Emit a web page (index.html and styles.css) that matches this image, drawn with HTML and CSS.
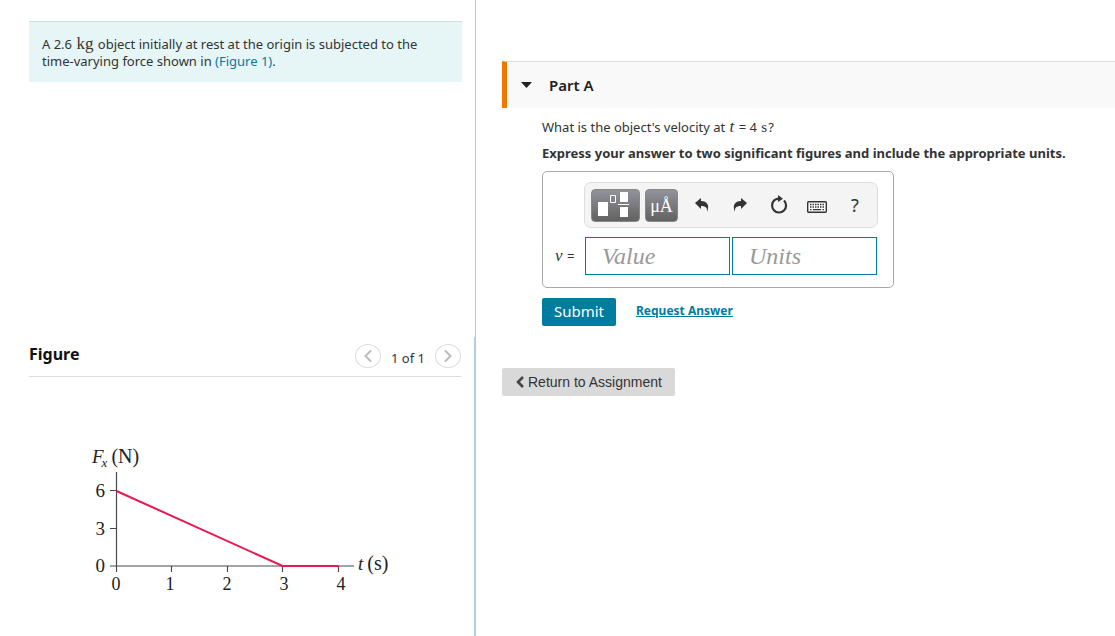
FILE: index.html
```html
<!DOCTYPE html>
<html lang="en">
<head>
    <meta charset="UTF-8">
    <meta name="viewport" content="width=device-width, initial-scale=1.0">
    <title>Part A</title>
    <link rel="stylesheet" href="styles.css">
</head>
<body>
    <div class="layout">
        <aside class="left">
            <section class="intro">
                <p class="problem">A 2.6 <span class="math">kg</span> object initially at rest at the origin is subjected to the time-varying force shown in <a href="#figure">(Figure 1)</a>.</p>
            </section>
            <section class="figure" id="figure">
                <header class="figure-header">
                    <h2>Figure</h2>
                    <nav class="pager">
                        <button type="button" class="round" aria-label="Previous figure">
                            <svg width="10" height="14" viewBox="0 0 10 14"><path d="M8 1.5 2.5 7 8 12.5" fill="none" stroke="#bbb" stroke-width="2"/></svg>
                        </button>
                        <span class="count">1 of 1</span>
                        <button type="button" class="round" aria-label="Next figure">
                            <svg width="10" height="14" viewBox="0 0 10 14"><path d="M2 1.5 7.5 7 2 12.5" fill="none" stroke="#bbb" stroke-width="2"/></svg>
                        </button>
                    </nav>
                </header>
                <svg class="graph" width="310" height="150" viewBox="0 0 310 150" role="img" aria-label="Force against time">
                    <g stroke="#4a4a4a" stroke-width="1.2" fill="none">
                        <path d="M28.5 26V120M22 120H266"/>
                        <path d="M22 44.5h6M22 82.5h6"/>
                        <path d="M28.5 120v6M83.5 120v6M139.5 120v6M194.5 120v6M250.5 120v6"/>
                    </g>
                    <path d="M28.5 45 194.5 120H250.5" fill="none" stroke="#ec1651" stroke-width="2"/>
                    <text x="4" y="17"><tspan class="var">F</tspan><tspan class="var sub" dy="4" dx="-2">x</tspan><tspan dy="-4" dx="4" class="unit">(N)</tspan></text>
                    <g text-anchor="end">
                        <text x="17" y="51">6</text>
                        <text x="17" y="89">3</text>
                        <text x="17" y="126">0</text>
                    </g>
                    <g text-anchor="middle" class="ticks">
                        <text x="28" y="144">0</text>
                        <text x="82" y="144">1</text>
                        <text x="139" y="144">2</text>
                        <text x="196" y="144">3</text>
                        <text x="253" y="144">4</text>
                    </g>
                    <text x="270" y="124"><tspan class="var">t</tspan><tspan dx="4" class="unit">(s)</tspan></text>
                </svg>
            </section>
        </aside>

        <main class="right">
            <header class="part-header">
                <svg width="11" height="6" viewBox="0 0 11 6"><path d="M0 0h11L5.5 6z" fill="#222"/></svg>
                <h1>Part A</h1>
            </header>
            <form class="part">
                <p class="question">What is the object's velocity at <i class="math">t</i> = 4 <span class="math small">s</span>?</p>
                <p class="hint">Express your answer to two significant figures and include the appropriate units.</p>
                <div class="answer">
                    <div class="toolbar">
                        <button type="button" class="key wide" aria-label="Templates">
                            <svg width="32" height="26" viewBox="0 0 32 26">
                                <g fill="#fff"><path d="M0 10h10v14H0zM22 0h8v10h-8zM22 15h8v10h-8zM20 12h11v1H20z"/></g>
                                <path d="M12.5 3.5h5v7h-5z" fill="none" stroke="#fff"/>
                            </svg>
                        </button>
                        <button type="button" class="key">μÅ</button>
                        <span class="tools">
                            <button type="button" class="tool" aria-label="Undo">
                                <svg width="16" height="16" viewBox="0 0 16 16"><path d="M1 6 7 1v3c6 0 9 4 6 11 .5-4-1-6-6-6v3z" fill="#333"/></svg>
                            </button>
                            <button type="button" class="tool" aria-label="Redo">
                                <svg width="16" height="16" viewBox="0 0 16 16"><path d="M15 6 9 1v3c-6 0-9 4-6 11-.5-4 1-6 6-6v3z" fill="#333"/></svg>
                            </button>
                            <button type="button" class="tool" aria-label="Reset">
                                <svg width="18" height="20" viewBox="0 0 18 20"><path d="M14 5.500A7 7 0 1 1 4.500 5.200Q6.500 3.700 9 3.700" fill="none" stroke="#333" stroke-width="2.2"/><path d="M8 0v7l5-3.300z" fill="#333"/></svg>
                            </button>
                            <button type="button" class="tool keyboard" aria-label="Keyboard shortcuts">
                                <svg width="20" height="12" viewBox="0 0 20 12"><rect x="0.7" y="0.7" width="18.6" height="10.6" rx="1" fill="#fff" stroke="#333" stroke-width="1.4"/><path d="M3 3.500h14M3 6h14" stroke="#333" stroke-width="1.5" stroke-dasharray="1.5 1"/><path d="M3 8.700h1.500M6 8.700h8M15.500 8.700H17" stroke="#333" stroke-width="1.3"/></svg>
                            </button>
                            <button type="button" class="tool help" aria-label="Help">?</button>
                        </span>
                    </div>
                    <div class="fields">
                        <label for="value"><i class="math">v</i> =</label>
                        <input type="text" id="value" placeholder="Value">
                        <input type="text" id="units" placeholder="Units" aria-label="Units">
                    </div>
                </div>
                <div class="actions">
                    <button type="submit" class="submit">Submit</button>
                    <a href="#request">Request Answer</a>
                </div>
            </form>
            <button type="button" class="return">
                <svg width="10" height="12" viewBox="0 0 10 12"><path d="M8 1 3 6l5 5" fill="none" stroke="#444" stroke-width="2.6"/></svg>
                Return to Assignment
            </button>
        </main>
    </div>
</body>
</html>
```
FILE: styles.css
```css
* {
    box-sizing: border-box;
}
body {
    margin: 0;
    font-family: "Noto Sans", "Open Sans", sans-serif;
    font-size: 13px;
    line-height: 17px;
    color: #333;
    background: #fff;
}
h1, h2, p {
    margin: 0;
}
button {
    font: inherit;
    padding: 0;
    border: none;
    background: none;
    cursor: pointer;
}
a {
    color: #007c9e;
}
.layout {
    display: grid;
    grid-template-columns: 476px 1fr;
    min-height: 100vh;
}
.math {
    margin: 0 1px;
    font-family: "Liberation Serif", serif;
    font-size: 17px;
    line-height: 0;
}
.small {
    font-size: 15px;
}

/* left column */
.left {
    display: grid;
    grid-template-rows: 53vh 1fr;
}
.intro {
    padding: 21px 13px 0 29px;
    border-right: 1px solid #c0c8d0;
}
.problem {
    padding: 14px 13px 12px;
    border-top: 1px solid #d5dcdc;
    background: #e6f6f6;
}
.problem a {
    text-decoration: none;
}
.figure {
    padding: 0 13px 0 29px;
    border-right: 2px solid #b8cce0;
}
.figure-header {
    display: flex;
    justify-content: space-between;
    align-items: center;
    height: 40px;
    padding-bottom: 2px;
    border-bottom: 1px solid #ddd;
}
.figure-header h2 {
    font-size: 16px;
    line-height: 20px;
    padding-bottom: 4px;
    color: #111;
}
.pager {
    display: flex;
    align-items: center;
    gap: 10px;
}
.round {
    display: flex;
    align-items: center;
    justify-content: center;
    width: 26px;
    height: 24px;
    border: 1px solid #ddd;
    border-radius: 50%;
}
.count {
    padding-top: 5px;
}
.graph {
    display: block;
    margin: 69px 0 0 59px;
    font-family: "Liberation Serif", serif;
    font-size: 19px;
    fill: #222;
}
.graph .ticks {
    font-size: 18px;
}
.graph .unit {
    font-size: 20px;
}
.graph .var {
    font-style: italic;
}
.graph .sub {
    font-size: 13px;
}

/* right column */
.right {
    padding: 61px 0 0 26px;
}
.part-header {
    display: flex;
    align-items: center;
    gap: 17px;
    height: 47px;
    padding-left: 14px;
    border-top: 1px solid #ddd;
    border-left: 5px solid #ee7700;
    background: #f9f9f9;
}
.part-header h1 {
    font-size: 15px;
    font-weight: 600;
    color: #222;
}
.part {
    padding: 11px 0 0 40px;
}
.hint {
    margin: 9px 0;
    font-weight: bold;
}
.answer {
    width: 352px;
    padding: 10px 15px 12px 11px;
    border: 1px solid #aaa;
    border-radius: 5px;
}
.toolbar {
    display: flex;
    align-items: center;
    gap: 5px;
    height: 46px;
    margin-left: 30px;
    padding: 0 6px;
    border: 1px solid #ddd;
    border-radius: 7px;
    background: #f4f4f4;
}
.key {
    width: 33px;
    height: 33px;
    border-radius: 4px;
    background: linear-gradient(#92929c, #626262);
    border: 1px solid #888;
    color: #fff;
    font-family: "Liberation Serif", serif;
    font-size: 18px;
    line-height: 32px;
}
.wide {
    display: flex;
    align-items: center;
    justify-content: flex-start;
    width: 49px;
    padding-left: 6px;
}
.tools {
    display: flex;
    flex: 1;
    justify-content: space-between;
    padding: 0 6px 0 9px;
}
.tool {
    display: flex;
    align-items: center;
    justify-content: center;
    width: 20px;
    height: 20px;
}
.keyboard {
    padding-top: 3px;
}
.help {
    font-size: 18px;
    color: #333;
}
.fields {
    display: flex;
    align-items: center;
    gap: 2px;
    margin-top: 9px;
    padding-right: 1px;
}
.fields label {
    width: 29px;
}
.fields input {
    flex: 1;
    min-width: 0;
    height: 38px;
    padding: 0 16px;
    border: 1px solid #007c9e;
    font-family: "Liberation Serif", serif;
    font-size: 24px;
    font-style: italic;
}
.fields input::placeholder {
    color: #999;
}
.actions {
    display: flex;
    align-items: flex-start;
    gap: 20px;
    margin-top: 10px;
}
.actions a {
    padding-top: 4px;
    font-weight: bold;
    font-size: 12px;
}
.submit {
    width: 74px;
    height: 28px;
    padding-bottom: 2px;
    border-radius: 2px;
    background: #007c9e;
    color: #fff;
    font-size: 15px;
}
.return {
    display: flex;
    align-items: center;
    gap: 3px;
    height: 28px;
    margin-top: 42px;
    padding: 0 13px;
    border-radius: 2px;
    background: #d9d9d9;
    color: #333;
    font-family: "Liberation Sans", sans-serif;
    font-size: 14px;
}
```
